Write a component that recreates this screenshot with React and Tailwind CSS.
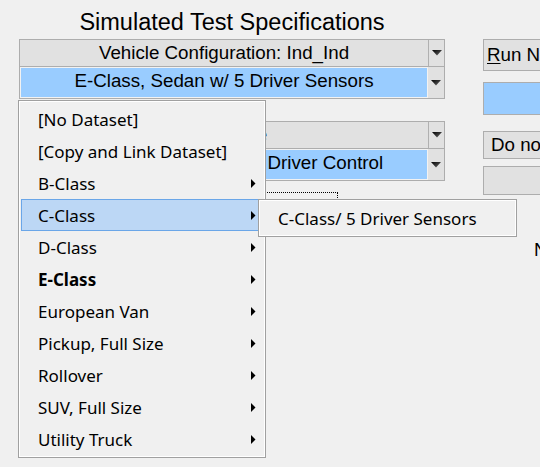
import React from "react";

function DownArrow() {
  return (
    <svg width="10" height="6" viewBox="0 0 10 6" className="block">
      <defs>
        <linearGradient id="ag" x1="0" y1="0" x2="1" y2="1">
          <stop offset="0" stopColor="#000" />
          <stop offset="1" stopColor="#6a6a6a" />
        </linearGradient>
      </defs>
      <polygon points="0,0 10,0 5,5.5" fill="url(#ag)" />
    </svg>
  );
}

function RightArrow() {
  return (
    <svg width="5" height="9" viewBox="0 0 5 9" className="block">
      <polygon points="0,0 4.5,4.5 0,9" fill="#000" />
    </svg>
  );
}

function Combo({ top, bottom }) {
  return (
    <div className="w-[426px] border border-[#adadad] bg-[#e1e1e1] flex flex-col">
      <div className="h-[26px] flex">
        <div className="flex-1 flex items-center justify-center text-[18.75px] leading-none whitespace-nowrap overflow-hidden">
          {top}
        </div>
        <div className="w-[16px] border-l border-[#b0b0b0] flex items-center justify-center">
          <DownArrow />
        </div>
      </div>
      <div className="h-px bg-[#adadad]" />
      <div className="h-[31px] flex">
        <div className="flex-1 bg-[#99ccff] border border-[#f2f2f2] flex items-center justify-center text-[18.75px] leading-none whitespace-nowrap overflow-hidden pb-[2px]">
          {bottom}
        </div>
        <div className="w-[16px] flex items-center justify-center">
          <DownArrow />
        </div>
      </div>
    </div>
  );
}

const items = [
  { label: "[No Dataset]" },
  { label: "[Copy and Link Dataset]" },
  { label: "B-Class", sub: true },
  { label: "C-Class", sub: true, hot: true },
  { label: "D-Class", sub: true },
  { label: "E-Class", sub: true, bold: true },
  { label: "European Van", sub: true },
  { label: "Pickup, Full Size", sub: true },
  { label: "Rollover", sub: true },
  { label: "SUV, Full Size", sub: true },
  { label: "Utility Truck", sub: true },
];

export default function App() {
  return (
    <div className="relative w-[540px] h-[467px] overflow-hidden bg-[#f0f0f0] flex font-['Liberation_Sans',Arial,sans-serif] text-black">
      {/* Left column */}
      <div className="ml-[19px] w-[426px] shrink-0 flex flex-col">
        <div className="h-[39px] pt-[9px] text-center text-[23.5px] leading-[26px] whitespace-nowrap">
          Simulated Test Specifications
        </div>
        <Combo
          top="Vehicle Configuration: Ind_Ind"
          bottom="E-Class, Sedan w/ 5 Driver Sensors"
        />
        <div className="h-[22px]" />
        <Combo top="Test Mode" bottom="Open Loop Maneuver + Driver Control" />
        <div className="mt-[11px] ml-[18px] w-[301px] h-[22px] border border-dotted border-black" />
      </div>

      {/* Right column */}
      <div className="ml-[38px] w-[200px] shrink-0 pt-[39px] flex flex-col text-[18.75px]">
        <div className="h-[32px] border border-[#adadad] bg-[#e1e1e1] pl-[3px] flex items-center whitespace-nowrap leading-none">
          <span>
            <span className="underline underline-offset-[2px]">R</span>un New Simulation
          </span>
        </div>
        <div className="mt-[11px] h-[33px] border border-[#adadad] bg-[#99ccff]" />
        <div className="mt-[16px] h-[28px] border border-[#adadad] bg-[#e1e1e1] pl-[7px] flex items-center whitespace-nowrap leading-none">
          Do not Run
        </div>
        <div className="mt-[7px] h-[29px] border border-[#adadad] bg-[#e1e1e1]" />
        <div className="mt-[44px] pl-[51px] leading-[22px] whitespace-nowrap">Notes</div>
      </div>

      {/* Popup menu */}
      <div className="absolute left-[18px] top-[100px] w-[248px] h-[358px] bg-[#f0f0f0] border border-[#a0a0a0] shadow-[inset_0_0_0_1px_#ffffff] pt-[2px] pl-[2px] font-['Noto_Sans',sans-serif] text-[17px]">
        {items.map((it) => (
          <div
            key={it.label}
            className={
              "w-[238px] h-[32px] border pl-[16px] pr-[2px] flex items-center justify-between whitespace-nowrap " +
              (it.hot ? "bg-[#bcd7f5] border-[#6aa6e8]" : "border-transparent") +
              (it.bold ? " font-bold" : "")
            }
          >
            <span className="leading-none">{it.label}</span>
            {it.sub ? <RightArrow /> : null}
          </div>
        ))}
      </div>

      {/* Submenu */}
      <div className="absolute left-[258px] top-[199px] w-[259px] h-[38px] bg-[#f0f0f0] border border-[#a0a0a0] shadow-[inset_0_0_0_1px_#ffffff] pt-[2px] pl-[2px] font-['Noto_Sans',sans-serif] text-[17px]">
        <div className="h-[32px] pl-[17px] flex items-center whitespace-nowrap">
          <span className="leading-none">C-Class/ 5 Driver Sensors</span>
        </div>
      </div>
    </div>
  );
}
